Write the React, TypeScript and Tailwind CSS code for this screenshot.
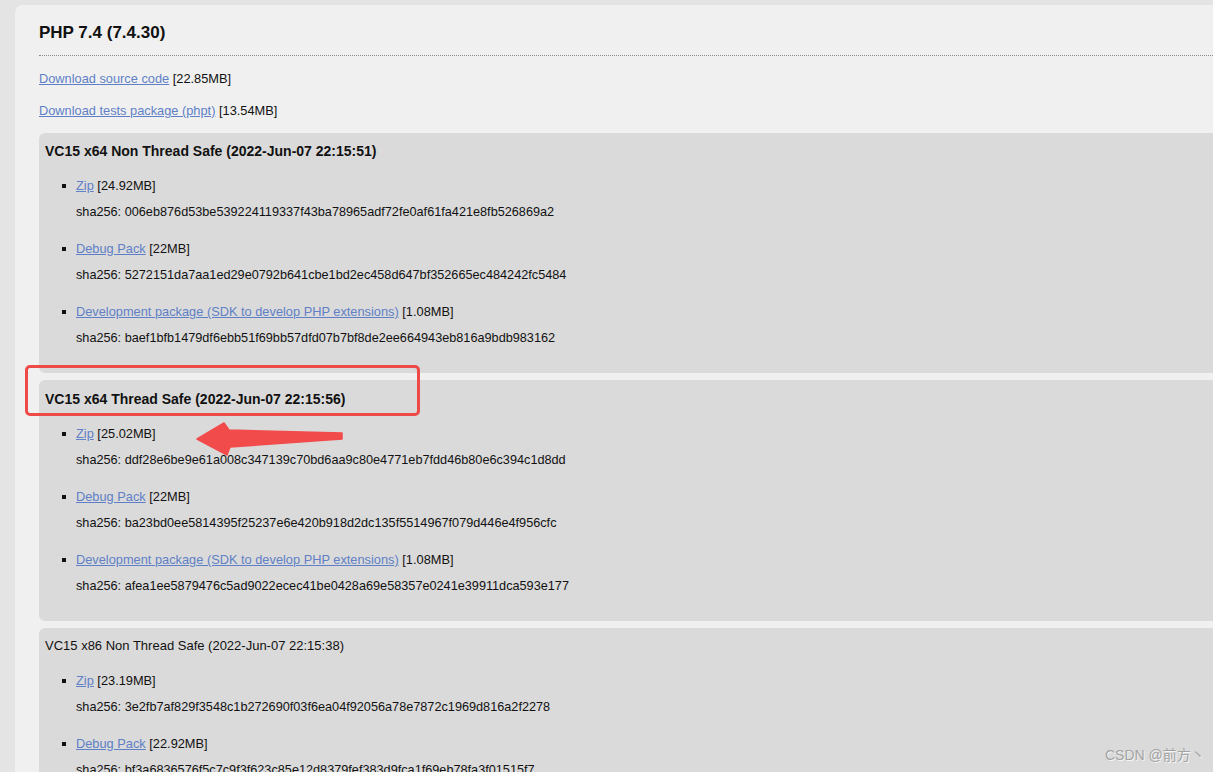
const FONT = { fontFamily: '"Liberation Sans", Arial, "Noto Sans CJK SC", sans-serif' }

type Item = { label: string; size: string; sha: string }
type Build = { title: string; bold: boolean; pad: string; items: Item[] }

const BUILDS: Build[] = [
  {
    title: 'VC15 x64 Non Thread Safe (2022-Jun-07 22:15:51)',
    bold: true,
    pad: 'pt-[10px]',
    items: [
      { label: 'Zip', size: '[24.92MB]', sha: '006eb876d53be539224119337f43ba78965adf72fe0af61fa421e8fb526869a2' },
      { label: 'Debug Pack', size: '[22MB]', sha: '5272151da7aa1ed29e0792b641cbe1bd2ec458d647bf352665ec484242fc5484' },
      { label: 'Development package (SDK to develop PHP extensions)', size: '[1.08MB]', sha: 'baef1bfb1479df6ebb51f69bb57dfd07b7bf8de2ee664943eb816a9bdb983162' },
    ],
  },
  {
    title: 'VC15 x64 Thread Safe (2022-Jun-07 22:15:56)',
    bold: true,
    pad: 'pt-[11px]',
    items: [
      { label: 'Zip', size: '[25.02MB]', sha: 'ddf28e6be9e61a008c347139c70bd6aa9c80e4771eb7fdd46b80e6c394c1d8dd' },
      { label: 'Debug Pack', size: '[22MB]', sha: 'ba23bd0ee5814395f25237e6e420b918d2dc135f5514967f079d446e4f956cfc' },
      { label: 'Development package (SDK to develop PHP extensions)', size: '[1.08MB]', sha: 'afea1ee5879476c5ad9022ecec41be0428a69e58357e0241e39911dca593e177' },
    ],
  },
  {
    title: 'VC15 x86 Non Thread Safe (2022-Jun-07 22:15:38)',
    bold: false,
    pad: 'pt-[10px]',
    items: [
      { label: 'Zip', size: '[23.19MB]', sha: '3e2fb7af829f3548c1b272690f03f6ea04f92056a78e7872c1969d816a2f2278' },
      { label: 'Debug Pack', size: '[22.92MB]', sha: 'bf3a6836576f5c7c9f3f623c85e12d8379fef383d9fca1f69eb78fa3f01515f7' },
    ],
  },
]

function BuildBox({ build }: { build: Build }) {
  return (
    <div className={`bg-[#dadada] rounded-[6px] pl-[6px] pb-[27px] ${build.pad}`}>
      <div className={`h-[16px] leading-[16px] ${build.bold ? 'text-[14px] font-bold' : 'text-[13px]'}`}>
        {build.title}
      </div>
      <ul className="mt-[19px] pl-[31px] flex flex-col gap-[21px]">
        {build.items.map((it) => (
          <li key={it.label} className="flex flex-col gap-[10px]">
            <div className="relative h-[16px] leading-[16px] text-[12.8px]">
              <span className="absolute -left-[14px] top-[6px] w-[4px] h-[4px] bg-[#111]" />
              <a href="#" className="text-[#5f80c6] underline">{it.label}</a> {it.size}
            </div>
            <div className="h-[16px] leading-[16px] text-[12.7px]">sha256: {it.sha}</div>
          </li>
        ))}
      </ul>
    </div>
  )
}

export default function App() {
  return (
    <div className="relative w-[1213px] h-[772px] overflow-hidden bg-[#e4e4e4] text-[#111]" style={FONT}>
      <div className="ml-[15px] mt-[5px] w-[1400px] min-h-[800px] bg-[#f0f0f0] rounded-tl-[8px] pl-[24px] pt-[18px]">
        <h1 className="h-[20px] leading-[20px] text-[17px] font-bold">PHP 7.4 (7.4.30)</h1>
        <div className="mt-[12px] border-b border-dotted border-[#8a8a8a]" />
        <div className="mt-[15px] flex flex-col gap-[16px] text-[12.8px]">
          <div className="h-[16px] leading-[16px]">
            <a href="#" className="text-[#5f80c6] underline">Download source code</a> [22.85MB]
          </div>
          <div className="h-[16px] leading-[16px]">
            <a href="#" className="text-[#5f80c6] underline">Download tests package (phpt)</a> [13.54MB]
          </div>
        </div>
        <div className="mt-[14px] flex flex-col gap-[7px]">
          {BUILDS.map((b) => (
            <BuildBox key={b.title} build={b} />
          ))}
        </div>
      </div>

      {/* red highlight box */}
      <div className="absolute left-[25px] top-[365px] w-[395px] h-[51px] border-[3px] border-[#ef4a4a] rounded-[5px]" />

      {/* red arrow */}
      <svg className="absolute left-0 top-0" width="1213" height="772" viewBox="0 0 1213 772">
        <path
          d="M197 439 L224 423 L229 430 L342 433 L342 439 L230 447 L227 455 Z"
          fill="#f24b4b"
          stroke="#f24b4b"
          strokeWidth="1.5"
          strokeLinejoin="round"
        />
      </svg>

      <div
        className="absolute left-[1105px] top-[746px] text-[14px] leading-[18px] text-[#a3a3a3]"
        style={{ textShadow: '1px 1px 0 #f4f4f4' }}
      >
        CSDN @前方丶
      </div>
    </div>
  )
}
